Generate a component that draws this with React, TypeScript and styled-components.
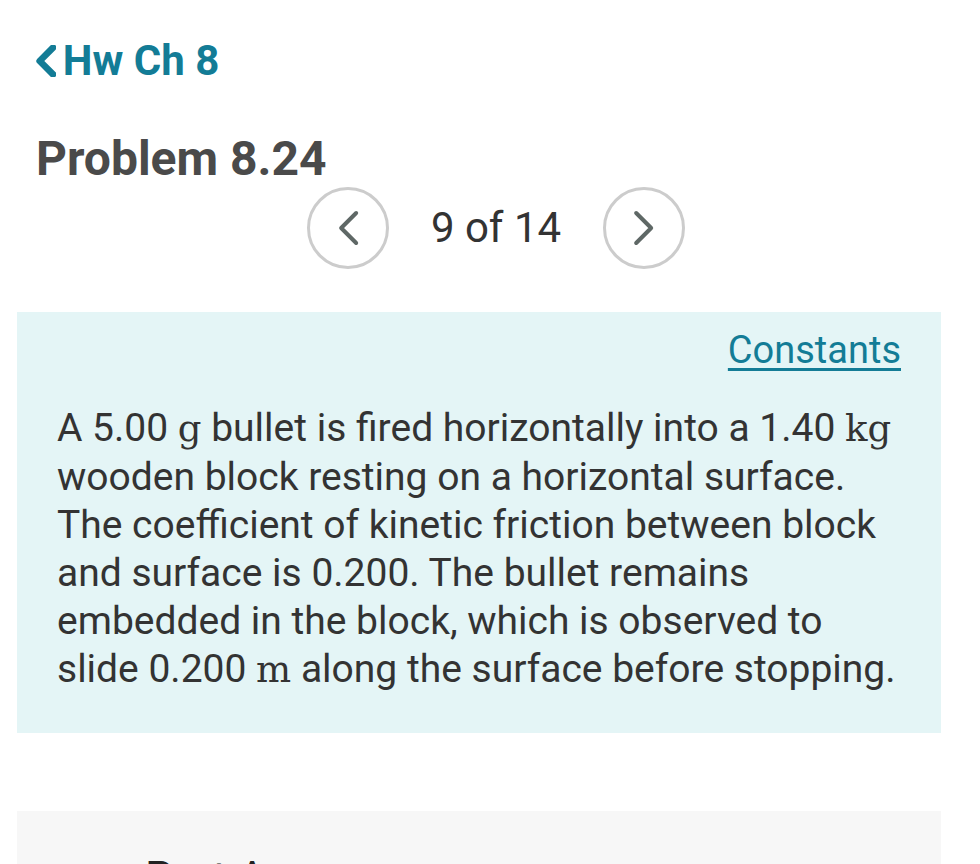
import React from 'react'
import styled, { createGlobalStyle } from 'styled-components'

const GlobalStyle = createGlobalStyle`
  body {
    margin: 0;
    background: #ffffff;
    font-family: Roboto, "Noto Sans", sans-serif;
  }
`

const Page = styled.div`
  width: 980px;
  height: 864px;
  overflow: hidden;
  display: flex;
  flex-direction: column;
`

const BackLink = styled.a`
  display: flex;
  align-items: center;
  gap: 7px;
  margin: 37px 0 0 36px;
  color: #137c96;
  font-size: 42px;
  font-weight: 700;
  line-height: 48px;
  text-decoration: none;
`

const Title = styled.h1`
  margin: 46px 0 0 36px;
  color: #4a4a4a;
  font-size: 48px;
  font-weight: 700;
  line-height: 56px;
`

const Pager = styled.div`
  display: flex;
  align-items: center;
  justify-content: center;
  gap: 42px;
  margin: 0 0 0 12px;
`

const RoundButton = styled.button`
  width: 82px;
  height: 82px;
  border-radius: 50%;
  border: 3px solid #cccccc;
  background: #ffffff;
  display: flex;
  align-items: center;
  justify-content: center;
  padding: 0;
`

const Count = styled.span`
  color: #333333;
  font-size: 42px;
  line-height: 48px;
`

const Card = styled.section<{ $tone: string }>`
  margin: 0 39px 0 17px;
  background: ${p => p.$tone};
`

const InfoCard = styled(Card)`
  margin-top: 43px;
  padding: 16px 40px 39px 40px;
  display: flex;
  flex-direction: column;
`

const ConstantsLink = styled.a`
  align-self: flex-end;
  color: #137c96;
  font-size: 38px;
  line-height: 44px;
  text-decoration: underline;
  text-decoration-thickness: 3px;
  text-underline-offset: 5px;
`

const Statement = styled.p`
  margin: 32px 0 0 0;
  color: #333333;
  font-size: 39px;
  line-height: 48px;
`

const Unit = styled.span`
  font-family: "DejaVu Serif", "Liberation Serif", serif;
  font-size: 0.95em;
`

const PartCard = styled(Card)`
  margin-top: 78px;
  padding: 41px 0 0 128px;
  flex: 1;
`

const PartTitle = styled.h2`
  margin: 0;
  color: #222222;
  font-size: 44px;
  font-weight: 400;
  line-height: 52px;
`

const Chevron = ({ dir, color, size, stroke }: { dir: 'left' | 'right'; color: string; size: number; stroke: number }) => (
  <svg width={size * 0.62} height={size} viewBox="0 0 22 36" fill="none">
    <path
      d={dir === 'left' ? 'M19 3 L4 18 L19 33' : 'M3 3 L18 18 L3 33'}
      stroke={color}
      strokeWidth={stroke}
      strokeLinecap="round"
      strokeLinejoin="round"
    />
  </svg>
)

export default function App() {
  return (
    <Page>
      <GlobalStyle />
      <BackLink href="#">
        <Chevron dir="left" color="#137c96" size={32} stroke={7.5} />
        Hw Ch 8
      </BackLink>
      <Title>Problem 8.24</Title>
      <Pager>
        <RoundButton aria-label="previous">
          <Chevron dir="left" color="#5f6866" size={36} stroke={4} />
        </RoundButton>
        <Count>9 of 14</Count>
        <RoundButton aria-label="next">
          <Chevron dir="right" color="#5f6866" size={36} stroke={4} />
        </RoundButton>
      </Pager>
      <InfoCard $tone="#e4f5f6">
        <ConstantsLink href="#">Constants</ConstantsLink>
        <Statement>
          A 5.00 <Unit>g</Unit> bullet is fired horizontally into a 1.40 <Unit>kg</Unit> wooden block resting on a
          horizontal surface. The coefficient of kinetic friction between block and surface is 0.200. The bullet
          remains embedded in the block, which is observed to slide 0.200 <Unit>m</Unit> along the surface before
          stopping.
        </Statement>
      </InfoCard>
      <PartCard $tone="#f7f7f7">
        <PartTitle>Part A</PartTitle>
      </PartCard>
    </Page>
  )
}
